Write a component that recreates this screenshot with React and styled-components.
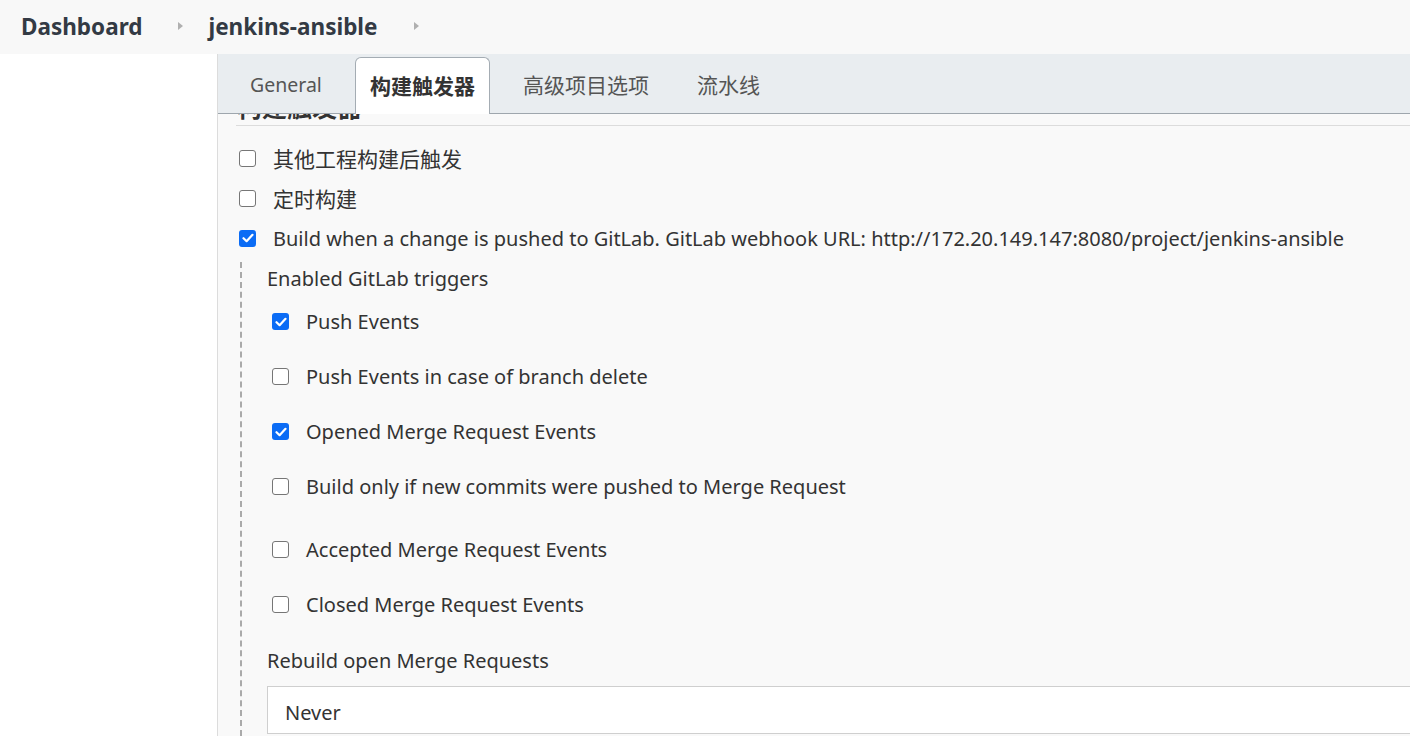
import React from "react";
import styled, { createGlobalStyle } from "styled-components";

const GlobalStyle = createGlobalStyle`
  html, body { margin: 0; padding: 0; }
  body {
    font-family: "Noto Sans", "Noto Sans CJK SC", sans-serif;
    color: #333;
    background: #fff;
  }
  * { box-sizing: border-box; }
`;

const Page = styled.div`
  width: 1410px;
  height: 736px;
  overflow: hidden;
  display: flex;
  flex-direction: column;
`;

const TopBar = styled.header`
  height: 54px;
  flex: none;
  background: #f8f8f8;
  display: flex;
  align-items: center;
  padding: 0 0 2px 21px;
`;

const Crumb = styled.span`
  font-size: 22.5px;
  font-weight: 700;
  color: #333a44;
`;

const Chevron = styled.span`
  width: 0;
  height: 0;
  border-left: 5px solid #b0b0b0;
  border-top: 4.5px solid transparent;
  border-bottom: 4.5px solid transparent;
  margin: 0 25px 0 36px;
`;

const Body = styled.div`
  flex: 1;
  display: flex;
  min-height: 0;
`;

const SidePanel = styled.aside`
  width: 218px;
  flex: none;
  background: #fff;
  border-right: 1px solid #dcdcdc;
`;

const Main = styled.main`
  flex: 1;
  min-width: 0;
  background: #f9f9f9;
  overflow: hidden;
  display: flex;
  flex-direction: column;
`;

const TabBar = styled.nav`
  height: 60px;
  flex: none;
  background: #e9edf0;
  border-bottom: 1px solid #9ea6ad;
  display: flex;
  align-items: flex-end;
  padding-left: 17px;
  gap: 18px;
`;

const Tab = styled.div`
  height: ${(p) => (p.$active ? "57px" : "59px")};
  margin-bottom: ${(p) => (p.$active ? "-1px" : "0")};
  padding: 0 14px ${(p) => (p.$active ? "3px" : "0")};
  display: flex;
  align-items: center;
  font-size: ${(p) => (p.$cjk ? "21px" : "19.5px")};
  font-weight: ${(p) => (p.$active ? 700 : 400)};
  color: ${(p) => (p.$active ? "#333" : "#555")};
  background: ${(p) => (p.$active ? "#fff" : "transparent")};
  border: 1px solid ${(p) => (p.$active ? "#a4acb3" : "transparent")};
  border-bottom: none;
  border-radius: 6px 6px 0 0;
`;

const Content = styled.section`
  flex: 1;
  padding-left: 18px;
  display: flex;
  flex-direction: column;
`;

const TitleClip = styled.div`
  height: 8px;
  overflow: hidden;
`;

const SectionTitle = styled.h2`
  margin: -22px 0 0 1px;
  font-size: 25px;
  line-height: 30px;
  font-weight: 700;
  color: #333;
`;

const Divider = styled.hr`
  margin: 3px 0 12px;
  border: none;
  border-top: 1px solid #dcdcdc;
`;

const OptionRow = styled.label`
  height: ${(p) => p.$h || 40}px;
  margin-bottom: ${(p) => p.$mb || 0}px;
  display: flex;
  align-items: center;
  padding-left: ${(p) => p.$pl || 3}px;
  font-size: ${(p) => (p.$cjk ? "21px" : "20px")};
  color: #333;
  white-space: nowrap;
`;

const Box = styled.span`
  width: 17px;
  height: 17px;
  flex: none;
  border-radius: 3px;
  border: ${(p) => (p.$checked ? "none" : "1.5px solid #767676")};
  background: ${(p) => (p.$checked ? "#0b6cf5" : "#fff")};
  display: flex;
  align-items: center;
  justify-content: center;
  margin-right: 17px;
`;

const Nested = styled.div`
  margin-left: 4px;
  margin-top: 4px;
  padding-left: 25px;
  border-left: 2px dashed #aaaaaa;
  flex: 1;
  display: flex;
  flex-direction: column;
`;

const GroupLabel = styled.div`
  height: ${(p) => p.$h || 32}px;
  margin-top: ${(p) => p.$mt || 0}px;
  display: flex;
  align-items: center;
  font-size: 20px;
  color: #333;
`;

const SelectBox = styled.div`
  margin-top: 12px;
  margin-right: -40px;
  height: 48px;
  flex: none;
  background: #fff;
  border: 1px solid #cfcfcf;
  display: flex;
  align-items: center;
  padding: 4px 0 0 17px;
  font-size: 20px;
  color: #333;
`;

function Check({ checked }) {
  return (
    <Box $checked={checked}>
      {checked && (
        <svg width="12" height="10" viewBox="0 0 12 10">
          <path d="M1.5 5.2 L4.6 8.2 L10.5 1.8" fill="none" stroke="#fff" strokeWidth="2.2" strokeLinecap="round" strokeLinejoin="round" />
        </svg>
      )}
    </Box>
  );
}

const tabs = [
  { t: "General", cjk: false },
  { t: "构建触发器", cjk: true },
  { t: "高级项目选项", cjk: true },
  { t: "流水线", cjk: true },
];

const topOptions = [
  { text: "其他工程构建后触发", checked: false, cjk: true },
  { text: "定时构建", checked: false, cjk: true },
  {
    text: "Build when a change is pushed to GitLab. GitLab webhook URL: http://172.20.149.147:8080/project/jenkins-ansible",
    checked: true,
  },
];

const triggers = [
  { text: "Push Events", checked: true },
  { text: "Push Events in case of branch delete", checked: false },
  { text: "Opened Merge Request Events", checked: true },
  { text: "Build only if new commits were pushed to Merge Request", checked: false, mb: 8 },
  { text: "Accepted Merge Request Events", checked: false },
  { text: "Closed Merge Request Events", checked: false },
];

export default function App() {
  return (
    <>
      <GlobalStyle />
      <Page>
        <TopBar>
          <Crumb>Dashboard</Crumb>
          <Chevron />
          <Crumb>jenkins-ansible</Crumb>
          <Chevron />
        </TopBar>
        <Body>
          <SidePanel />
          <Main>
            <TabBar>
              {tabs.map((t, i) => (
                <Tab key={t.t} $active={i === 1} $cjk={t.cjk}>{t.t}</Tab>
              ))}
            </TabBar>
            <Content>
              <TitleClip>
                <SectionTitle>构建触发器</SectionTitle>
              </TitleClip>
              <Divider />
              {topOptions.map((o) => (
                <OptionRow key={o.text} $cjk={o.cjk}>
                  <Check checked={o.checked} />
                  {o.text}
                </OptionRow>
              ))}
              <Nested>
                <GroupLabel>Enabled GitLab triggers</GroupLabel>
                {triggers.map((o) => (
                  <OptionRow key={o.text} $h={55} $pl={5} $mb={o.mb}>
                    <Check checked={o.checked} />
                    {o.text}
                  </OptionRow>
                ))}
                <GroupLabel $mt={14} $h={28}>Rebuild open Merge Requests</GroupLabel>
                <SelectBox>Never</SelectBox>
              </Nested>
            </Content>
          </Main>
        </Body>
      </Page>
    </>
  );
}
